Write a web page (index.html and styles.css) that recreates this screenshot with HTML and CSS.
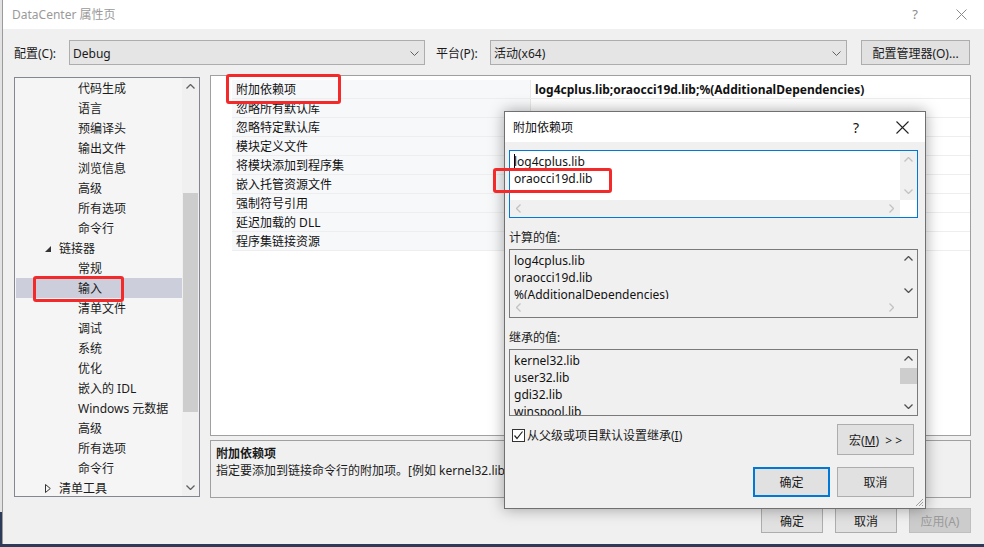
FILE: index.html
```html
<!DOCTYPE html>
<html>
<head>
    <meta charset="utf-8" />
    <title>DataCenter 属性页</title>
    <link rel="stylesheet" href="styles.css">
</head>
<body>
    <div class="window">
        <div class="titlebar">
            <span class="title">DataCenter 属性页</span>
            <span class="caption-btn help">?</span>
            <span class="caption-btn">
                <svg width="11" height="11" viewBox="0 0 11 11"><path d="M0.5 0.5 L10.5 10.5 M10.5 0.5 L0.5 10.5" stroke="#8a8a8a" stroke-width="1" fill="none"/></svg>
            </span>
        </div>

        <div class="toolbar">
            <span class="field-label">配置(C):</span>
            <div class="combo combo-config">
                <span>Debug</span>
                <svg width="9" height="5" viewBox="0 0 9 5"><polyline points="0.5,0.5 4.5,4.5 8.5,0.5" stroke="#606060" fill="none"/></svg>
            </div>
            <span class="field-label platform-label">平台(P):</span>
            <div class="combo combo-platform">
                <span>活动(x64)</span>
                <svg width="9" height="5" viewBox="0 0 9 5"><polyline points="0.5,0.5 4.5,4.5 8.5,0.5" stroke="#606060" fill="none"/></svg>
            </div>
            <button class="btn btn-manager" type="button">配置管理器(O)...</button>
        </div>

        <div class="main">
            <div class="tree">
                <ul class="tree-items">
                    <li>代码生成</li>
                    <li>语言</li>
                    <li>预编译头</li>
                    <li>输出文件</li>
                    <li>浏览信息</li>
                    <li>高级</li>
                    <li>所有选项</li>
                    <li>命令行</li>
                    <li class="group">
                        <svg width="6" height="6" viewBox="0 0 6 6"><polygon points="6,0 6,6 0,6" fill="#333"/></svg>
                        链接器
                    </li>
                    <li>常规</li>
                    <li class="selected">输入</li>
                    <li>清单文件</li>
                    <li>调试</li>
                    <li>系统</li>
                    <li>优化</li>
                    <li>嵌入的 IDL</li>
                    <li>Windows 元数据</li>
                    <li>高级</li>
                    <li>所有选项</li>
                    <li>命令行</li>
                    <li class="group">
                        <svg width="6" height="9" viewBox="0 0 6 9"><polygon points="0.5,0.5 5.3,4.5 0.5,8.5" fill="none" stroke="#333"/></svg>
                        清单工具
                    </li>
                </ul>
                <div class="vscroll">
                    <span class="arrow"><svg width="9" height="5" viewBox="0 0 9 5"><polyline points="0.5,4.5 4.5,0.5 8.5,4.5" stroke="#606060" stroke-width="1.3" fill="none"/></svg></span>
                    <div class="thumb"></div>
                    <span class="arrow arrow-end"><svg width="9" height="5" viewBox="0 0 9 5"><polyline points="0.5,0.5 4.5,4.5 8.5,0.5" stroke="#606060" stroke-width="1.3" fill="none"/></svg></span>
                </div>
            </div>

            <div class="right">
                <div class="grid">
                    <div class="prop-row">
                        <div class="prop-name">附加依赖项</div>
                        <div class="prop-value">log4cplus.lib;oraocci19d.lib;%(AdditionalDependencies)</div>
                    </div>
                    <div class="prop-row"><div class="prop-name">忽略所有默认库</div><div class="prop-value"></div></div>
                    <div class="prop-row"><div class="prop-name">忽略特定默认库</div><div class="prop-value"></div></div>
                    <div class="prop-row"><div class="prop-name">模块定义文件</div><div class="prop-value"></div></div>
                    <div class="prop-row"><div class="prop-name">将模块添加到程序集</div><div class="prop-value"></div></div>
                    <div class="prop-row"><div class="prop-name">嵌入托管资源文件</div><div class="prop-value"></div></div>
                    <div class="prop-row"><div class="prop-name">强制符号引用</div><div class="prop-value"></div></div>
                    <div class="prop-row"><div class="prop-name">延迟加载的 DLL</div><div class="prop-value"></div></div>
                    <div class="prop-row"><div class="prop-name">程序集链接资源</div><div class="prop-value"></div></div>
                </div>
                <div class="desc">
                    <div class="desc-title">附加依赖项</div>
                    <div class="desc-text">指定要添加到链接命令行的附加项。[例如 kernel32.lib</div>
                </div>
            </div>
        </div>

        <div class="footer">
            <button class="btn" type="button">确定</button>
            <button class="btn" type="button">取消</button>
            <button class="btn btn-disabled" type="button">应用(A)</button>
        </div>
    </div>

    <div class="dialog">
        <div class="dialog-title">
            <span class="title">附加依赖项</span>
            <span class="caption-btn dark-help">?</span>
            <span class="caption-btn">
                <svg width="13" height="13" viewBox="0 0 13 13"><path d="M0.5 0.5 L12.5 12.5 M12.5 0.5 L0.5 12.5" stroke="#222" stroke-width="1.1" fill="none"/></svg>
            </span>
        </div>
        <div class="dialog-body">
            <div class="listbox edit">
                <div class="list-text"><span class="caret"></span>log4cplus.lib<br>oraocci19d.lib</div>
                <div class="vbar">
                    <span class="arrow"><svg width="9" height="5" viewBox="0 0 9 5"><polyline points="0.5,4.5 4.5,0.5 8.5,4.5" stroke="#c2c2c2" stroke-width="1.3" fill="none"/></svg></span>
                    <span class="arrow"><svg width="9" height="5" viewBox="0 0 9 5"><polyline points="0.5,0.5 4.5,4.5 8.5,0.5" stroke="#c2c2c2" stroke-width="1.3" fill="none"/></svg></span>
                </div>
                <div class="hbar">
                    <span class="arrow"><svg width="5" height="9" viewBox="0 0 5 9"><polyline points="4.5,0.5 0.5,4.5 4.5,8.5" stroke="#c2c2c2" stroke-width="1.3" fill="none"/></svg></span>
                    <span class="arrow"><svg width="5" height="9" viewBox="0 0 5 9"><polyline points="0.5,0.5 4.5,4.5 0.5,8.5" stroke="#c2c2c2" stroke-width="1.3" fill="none"/></svg></span>
                </div>
                <div class="corner"></div>
            </div>

            <div class="field-caption">计算的值:</div>
            <div class="listbox computed">
                <div class="list-text">log4cplus.lib<br>oraocci19d.lib<br>%(AdditionalDependencies)</div>
                <div class="vbar">
                    <span class="arrow"><svg width="9" height="5" viewBox="0 0 9 5"><polyline points="0.5,4.5 4.5,0.5 8.5,4.5" stroke="#505050" stroke-width="1.3" fill="none"/></svg></span>
                    <span class="arrow"><svg width="9" height="5" viewBox="0 0 9 5"><polyline points="0.5,0.5 4.5,4.5 8.5,0.5" stroke="#505050" stroke-width="1.3" fill="none"/></svg></span>
                </div>
                <div class="hbar">
                    <span class="arrow"><svg width="5" height="9" viewBox="0 0 5 9"><polyline points="4.5,0.5 0.5,4.5 4.5,8.5" stroke="#c2c2c2" stroke-width="1.3" fill="none"/></svg></span>
                    <span class="arrow"><svg width="5" height="9" viewBox="0 0 5 9"><polyline points="0.5,0.5 4.5,4.5 0.5,8.5" stroke="#c2c2c2" stroke-width="1.3" fill="none"/></svg></span>
                </div>
                <div class="corner"></div>
            </div>

            <div class="field-caption">继承的值:</div>
            <div class="listbox inherited">
                <div class="list-text">kernel32.lib<br>user32.lib<br>gdi32.lib<br>winspool.lib</div>
                <div class="vbar">
                    <span class="arrow"><svg width="9" height="5" viewBox="0 0 9 5"><polyline points="0.5,4.5 4.5,0.5 8.5,4.5" stroke="#505050" stroke-width="1.3" fill="none"/></svg></span>
                    <div class="thumb small-thumb"></div>
                    <span class="arrow arrow-end"><svg width="9" height="5" viewBox="0 0 9 5"><polyline points="0.5,0.5 4.5,4.5 8.5,0.5" stroke="#505050" stroke-width="1.3" fill="none"/></svg></span>
                </div>
            </div>

            <div class="dialog-options">
                <label class="checkbox-label">
                    <span class="check">
                        <svg width="11" height="11" viewBox="0 0 11 11"><polyline points="1.5,5.5 4,8.5 9.5,1.5" stroke="#222" stroke-width="1.2" fill="none"/></svg>
                    </span>
                    从父级或项目默认设置继承(<u>I</u>)
                </label>
                <button class="btn btn-macro" type="button">宏(<u>M</u>)&nbsp;&nbsp;&gt; &gt;</button>
            </div>

            <div class="dialog-actions">
                <button class="btn btn-default" type="button">确定</button>
                <button class="btn" type="button">取消</button>
            </div>

            <svg class="grip" width="9" height="9" viewBox="0 0 9 9">
                <path d="M8 1 L1 8 M8 4 L4 8 M8 7 L7 8" stroke="#a0a0a0" stroke-width="1" fill="none"/>
            </svg>
        </div>
    </div>

    <div class="mark mark-prop"></div>
    <div class="mark mark-input"></div>
    <div class="mark mark-lib"></div>
</body>
</html>
```

FILE: styles.css
```css
* {
    margin: 0;
    padding: 0;
    box-sizing: border-box;
}

body {
    position: relative;
    width: 984px;
    height: 547px;
    overflow: hidden;
    background: linear-gradient(#e2e2e2 0, #e2e2e2 512px, #2d3a58 512px);
    font: 12px/17px "Noto Sans", "Noto Sans CJK SC", sans-serif;
    color: #1b1b1b;
}

.window {
    margin-left: 2px;
    width: 982px;
    height: 544px;
    background: #f0f0f0;
    border-left: 1px solid #9b9b9b;
}

.titlebar {
    height: 29px;
    background: #fff;
    display: flex;
    align-items: center;
    padding-left: 9px;
    color: #9a9a9a;
}

.titlebar .title,
.dialog-title .title {
    flex: 1;
}

.caption-btn {
    width: 46px;
    height: 29px;
    display: flex;
    align-items: center;
    justify-content: center;
}

.help {
    color: #8a8a8a;
    font-size: 13px;
}

.toolbar {
    display: flex;
    align-items: center;
    height: 25px;
    margin-top: 11px;
    padding-left: 11px;
}

.field-label {
    width: 55px;
    padding-top: 1px;
}

.platform-label {
    margin-left: 11px;
    width: 54px;
}

.combo {
    height: 25px;
    background: #e5e5e5;
    border: 1px solid #adadad;
    display: flex;
    align-items: center;
    justify-content: space-between;
    padding: 1px 5px 0 3px;
}

.combo-config {
    width: 356px;
}

.combo-platform {
    width: 357px;
}

.btn {
    background: #e1e1e1;
    border: 1px solid #adadad;
    font: inherit;
    color: #1b1b1b;
    height: 25px;
    padding-top: 1px;
}

.btn-manager {
    margin-left: 14px;
    width: 109px;
}

.main {
    display: flex;
    height: 423px;
    margin-top: 10px;
    padding-left: 11px;
}

.tree {
    margin-top: 2px;
    width: 186px;
    height: 420px;
    border: 1px solid #828790;
    background: #f5f5f5;
    display: flex;
    overflow: hidden;
}

.tree-items {
    list-style: none;
    flex: 1;
    overflow: hidden;
}

.tree-items li {
    height: 20px;
    line-height: 20px;
    padding-top: 1px;
    padding-left: 63px;
    white-space: nowrap;
}

.tree-items li.group {
    display: flex;
    align-items: center;
    padding-left: 30px;
}

.tree-items li.group svg {
    margin-right: 8px;
}

.tree-items li.selected {
    background: #cccedb;
    margin-left: 1px;
    padding-left: 62px;
}

.vscroll {
    width: 17px;
    display: flex;
    flex-direction: column;
    align-items: center;
    background: #f0f0f0;
}

.arrow {
    width: 17px;
    height: 17px;
    display: flex;
    align-items: center;
    justify-content: center;
    flex-shrink: 0;
}

.arrow-end {
    margin-top: auto;
}

.thumb {
    width: 15px;
    height: 219px;
    margin-top: 98px;
    background: #cdcdcd;
}

.right {
    margin-left: 10px;
    width: 761px;
    display: flex;
    flex-direction: column;
}

.grid {
    height: 361px;
    background: #fff;
    border: 1px solid #a0a0a0;
    padding: 4px 0 0 21px;
}

.prop-row {
    display: flex;
    height: 19px;
    border-bottom: 1px solid #eeeeee;
}

.prop-name {
    width: 299px;
    background: #f7f8fa;
    border-right: 1px solid #e8e8e8;
    padding: 1px 0 0 4px;
    line-height: 18px;
    color: #111;
}

.prop-value {
    flex: 1;
    padding: 1px 0 0 4px;
    line-height: 18px;
    font-weight: bold;
    color: #111;
}

.desc {
    margin-top: 4px;
    height: 58px;
    border: 1px solid #a0a0a0;
    padding: 4px 5px 3px;
}

.desc-title {
    font-weight: bold;
}

.footer {
    display: flex;
    justify-content: flex-end;
    gap: 12px;
    margin-top: 10px;
    padding-right: 13px;
}

.footer .btn {
    width: 62px;
}

.btn-disabled {
    background: #cccccc;
    border-color: #bfbfbf;
    color: #9a9a9a;
}

/* the dialog window sitting on top */
.dialog {
    position: absolute;
    left: 504px;
    top: 111px;
    width: 422px;
    height: 398px;
    background: #f0f0f0;
    border: 1px solid #707070;
    box-shadow: 0 0 14px rgba(0, 0, 0, 0.35);
    display: flex;
    flex-direction: column;
}

.dialog-title {
    height: 30px;
    background: #fff;
    display: flex;
    align-items: center;
    padding-left: 8px;
    color: #111;
}

.dialog-title .caption-btn {
    height: 30px;
}

.dark-help {
    font-size: 14px;
}

.dialog-body {
    position: relative;
    flex: 1;
    display: flex;
    flex-direction: column;
    padding: 8px 7px 0 4px;
}

.listbox {
    display: grid;
    grid-template-columns: 1fr 17px;
    border: 1px solid #7a7a7a;
    background: #f0f0f0;
    overflow: hidden;
}

.edit {
    height: 68px;
    border-color: #0078d7;
    grid-template-rows: 1fr 17px;
}

.edit .list-text,
.edit .corner {
    background: #fff;
}

.computed {
    height: 69px;
    grid-template-rows: 1fr 18px;
}

.inherited {
    height: 67px;
    grid-template-rows: 1fr;
}

.list-text {
    padding: 2px 0 0 4px;
    overflow: hidden;
    white-space: nowrap;
    line-height: 17px;
    color: #111;
}

.caret {
    display: inline-block;
    width: 1px;
    height: 15px;
    background: #000;
    vertical-align: -3px;
    margin-right: -1px;
}

.vbar {
    display: flex;
    flex-direction: column;
    justify-content: space-between;
    background: #f0f0f0;
}

.small-thumb {
    width: 17px;
    height: 16px;
    margin-top: 1px;
}

.hbar {
    display: flex;
    justify-content: space-between;
    background: #f0f0f0;
}

.field-caption {
    margin-top: 11px;
    line-height: 17px;
}

.field-caption + .listbox {
    margin-top: 3px;
}

.dialog-options {
    display: flex;
    justify-content: space-between;
    margin-top: 8px;
    margin-right: 4px;
}

.checkbox-label {
    display: flex;
    align-items: center;
    height: 13px;
    margin-top: 5px;
    margin-left: 3px;
}

.check {
    width: 13px;
    height: 13px;
    border: 1px solid #333;
    background: #fff;
    margin-right: 2px;
    display: flex;
    align-items: center;
    justify-content: center;
}

.btn-macro {
    width: 77px;
    height: 31px;
}

.dialog-actions {
    display: flex;
    justify-content: flex-end;
    gap: 7px;
    margin-top: 12px;
    margin-right: 4px;
}

.dialog-actions .btn {
    width: 77px;
    height: 30px;
}

.btn-default {
    border: 2px solid #0078d7;
}

.grip {
    position: absolute;
    right: 1px;
    bottom: 1px;
}

/* red annotation boxes drawn over the screenshot */
.mark {
    position: absolute;
    border: 3px solid #f42a2a;
    border-radius: 3px;
}

.mark-prop {
    left: 226px;
    top: 74px;
    width: 115px;
    height: 30px;
}

.mark-input {
    left: 33px;
    top: 276px;
    width: 91px;
    height: 26px;
}

.mark-lib {
    left: 493px;
    top: 168px;
    width: 119px;
    height: 25px;
}
```
